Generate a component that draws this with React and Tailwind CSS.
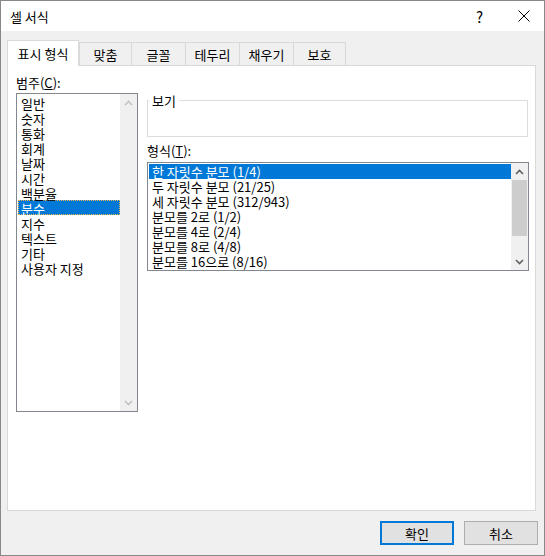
import { useState } from "react";

const tabs = ["표시 형식", "맞춤", "글꼴", "테두리", "채우기", "보호"];
const tabWidths = ["w-[72px]", "w-[52px]", "w-[54px]", "w-[54px]", "w-[54px]", "w-[53px]"];

const categories = [
  "일반",
  "숫자",
  "통화",
  "회계",
  "날짜",
  "시간",
  "백분율",
  "분수",
  "지수",
  "텍스트",
  "기타",
  "사용자 지정",
];

const formats = [
  "한 자릿수 분모 (1/4)",
  "두 자릿수 분모 (21/25)",
  "세 자릿수 분모 (312/943)",
  "분모를 2로 (1/2)",
  "분모를 4로 (2/4)",
  "분모를 8로 (4/8)",
  "분모를 16으로 (8/16)",
];

function Chevron({ up, disabled }) {
  return (
    <svg width="9" height="6" viewBox="0 0 9 6" className="block">
      <path
        d={up ? "M1 5 L4.5 1.5 L8 5" : "M1 1 L4.5 4.5 L8 1"}
        fill="none"
        stroke={disabled ? "#c2c2c2" : "#606060"}
        strokeWidth="1.6"
      />
    </svg>
  );
}

function ScrollBar({ disabled }) {
  return (
    <div className="w-[17px] bg-[#f0f0f0] flex flex-col">
      <div className="h-[17px] flex items-center justify-center">
        <Chevron up disabled={disabled} />
      </div>
      <div className="flex-1 flex flex-col px-[1px]">
        {!disabled && <div className="h-[56px] bg-[#cdcdcd]" />}
      </div>
      <div className="h-[17px] flex items-center justify-center">
        <Chevron disabled={disabled} />
      </div>
    </div>
  );
}

export default function App() {
  const [tab, setTab] = useState(0);
  const [category, setCategory] = useState(7);
  const [format, setFormat] = useState(0);

  return (
    <div
      className="w-[545px] h-[556px] border border-[#888888] bg-[#f0f0f0] flex flex-col text-[13px] leading-[15px] text-black select-none"
      style={{ fontFamily: '"Noto Sans CJK KR", "Noto Sans", sans-serif' }}
    >
      {/* title bar */}
      <div className="h-[30px] bg-white flex items-center pl-[9px] pr-[14px]">
        <span className="flex-1">셀 서식</span>
        <span className="text-[15px] mr-[35px]">?</span>
        <svg width="12" height="12" viewBox="0 0 12 12">
          <path d="M0.5 0.5 L11.5 11.5 M11.5 0.5 L0.5 11.5" stroke="#000" strokeWidth="1" />
        </svg>
      </div>

      {/* tabs */}
      <div className="flex items-end pt-[9px] pl-[6px]">
        {tabs.map((t, i) => (
          <button
            key={t}
            onClick={() => setTab(i)}
            className={
              "flex items-center justify-center border-t border-l border-[#d9d9d9] " +
              tabWidths[i] +
              (i === tabs.length - 1 ? " border-r" : "") +
              (i === tab
                ? " h-[26px] -mb-px bg-white border-r relative z-10"
                : " h-[23px] bg-[#f0f0f0]")
            }
          >
            {t}
          </button>
        ))}
      </div>

      {/* panel */}
      <div className="ml-[6px] w-[529px] h-[446px] bg-white border border-[#d9d9d9] flex items-start pt-[9px] pl-[8px]">
        {/* category */}
        <div className="flex flex-col w-[122px]">
          <div className="h-[15px] mb-[3px]">
            범주(<span className="underline">C</span>):
          </div>
          <div className="h-[319px] border border-[#828790] flex">
            <div className="flex-1 pt-[1px] pl-[1px]">
              {categories.map((c, i) => (
                <div
                  key={c}
                  onClick={() => setCategory(i)}
                  className={
                    "h-[15px] pl-[2px] border " +
                    (i === category
                      ? "bg-[#0078d7] text-white border-dotted border-[#f2b84b]"
                      : "border-transparent")
                  }
                >
                  {c}
                </div>
              ))}
            </div>
            <ScrollBar disabled />
          </div>
        </div>

        {/* right side */}
        <div className="ml-[9px] w-[382px] pt-[18px] flex flex-col">
          <fieldset className="h-[44px] border border-[#dcdcdc] mr-[1px]">
            <legend className="ml-[1px] px-[3px] leading-[15px]">보기</legend>
          </fieldset>
          <div className="mt-[6px] h-[15px]">
            형식(<span className="underline">T</span>):
          </div>
          <div className="mt-[4px] h-[109px] border border-[#828790] flex">
            <div className="flex-1 pt-[1px] pl-[1px]">
              {formats.map((f, i) => (
                <div
                  key={f}
                  onClick={() => setFormat(i)}
                  className={
                    "h-[15px] pl-[3px] whitespace-nowrap " +
                    (i === format ? "bg-[#0078d7] text-white" : "")
                  }
                >
                  {f}
                </div>
              ))}
            </div>
            <ScrollBar />
          </div>
        </div>
      </div>

      {/* buttons */}
      <div className="flex justify-end gap-[10px] mt-[10px] pr-[6px]">
        <button className="w-[74px] h-[24px] bg-[#e1e1e1] border-2 border-[#0078d7] flex items-center justify-center">
          확인
        </button>
        <button className="w-[74px] h-[24px] bg-[#e1e1e1] border border-[#adadad] flex items-center justify-center">
          취소
        </button>
      </div>
    </div>
  );
}
